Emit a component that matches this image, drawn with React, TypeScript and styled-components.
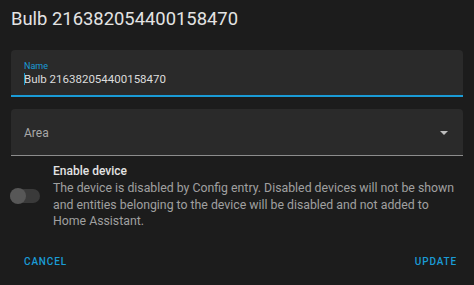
import React from "react";
import styled, { createGlobalStyle } from "styled-components";

const Global = createGlobalStyle`
  html, body { margin: 0; padding: 0; background: #1c1c1c; }
  body { font-family: Roboto, "Noto Sans", sans-serif; -webkit-font-smoothing: antialiased; }
  * { box-sizing: border-box; }
`;

const Dialog = styled.div`
  width: 474px;
  height: 285px;
  background: #1c1c1c;
  padding: 7px 11px 0 11px;
  display: flex;
  flex-direction: column;
`;

const Title = styled.h2`
  margin: 0;
  font-size: 18.4px;
  line-height: 24px;
  font-weight: 400;
  color: #e3e3e3;
`;

const Field = styled.div<{ $focused?: boolean; $mt: number }>`
  margin-top: ${(p) => p.$mt}px;
  background: #2a2a2a;
  border-radius: 4px 4px 0 0;
  border-bottom: ${(p) => (p.$focused ? "2px solid #1a9bd6" : "1px solid #8c8c8c")};
  padding: 0 13px;
  display: flex;
`;

const TextFieldInner = styled.div`
  height: 45px;
  padding-top: 11px;
  display: flex;
  flex-direction: column;
`;

const FloatLabel = styled.div`
  font-size: 9px;
  line-height: 11px;
  color: #1a9bd6;
`;

const Value = styled.div`
  font-size: 11.5px;
  line-height: 14px;
  color: #dcdcdc;
  position: relative;
`;

const Caret = styled.span`
  position: absolute;
  left: 0;
  top: 1px;
  width: 1px;
  height: 12px;
  background: #1a9bd6;
`;

const SelectInner = styled.div`
  height: 46px;
  flex: 1;
  display: flex;
  align-items: center;
  justify-content: space-between;
  padding-top: 1px;
`;

const Placeholder = styled.span`
  font-size: 12px;
  color: #a8a8a8;
`;

const Arrow = styled.span`
  width: 0;
  height: 0;
  border-left: 4px solid transparent;
  border-right: 4px solid transparent;
  border-top: 4.5px solid #bdbdbd;
  margin-right: 2px;
`;

const SwitchRow = styled.div`
  margin-top: 7px;
  display: flex;
  align-items: center;
`;

const SwitchBox = styled.div`
  width: 42px;
  flex: none;
  display: flex;
  align-items: center;
`;

const Track = styled.div`
  position: relative;
  width: 30px;
  height: 14px;
  margin-left: -1px;
  border-radius: 7px;
  background: #3a3a3a;
`;

const Thumb = styled.div`
  position: absolute;
  left: 0;
  top: -1px;
  width: 16px;
  height: 16px;
  border-radius: 50%;
  background: #575757;
`;

const SwitchText = styled.div`
  width: 406px;
  display: flex;
  flex-direction: column;
`;

const SwitchTitle = styled.div`
  font-size: 12px;
  line-height: 17px;
  font-weight: 500;
  color: #e3e3e3;
`;

const SwitchDesc = styled.div`
  font-size: 12.3px;
  line-height: 16.5px;
  color: #a0a0a0;
`;

const Actions = styled.div`
  margin-top: 26px;
  display: flex;
  justify-content: space-between;
  padding: 0 6px 0 13px;
`;

const Button = styled.button`
  background: none;
  border: none;
  padding: 0;
  font-family: Roboto, sans-serif;
  font-size: 10px;
  font-weight: 500;
  letter-spacing: 0.85px;
  color: #1a9bd6;
  line-height: 12px;
`;

export default function App() {
  return (
    <>
      <Global />
      <Dialog>
        <Title>Bulb 216382054400158470</Title>
        <Field $focused $mt={19}>
          <TextFieldInner>
            <FloatLabel>Name</FloatLabel>
            <Value>
              <Caret />
              Bulb 216382054400158470
            </Value>
          </TextFieldInner>
        </Field>
        <Field $mt={12}>
          <SelectInner>
            <Placeholder>Area</Placeholder>
            <Arrow />
          </SelectInner>
        </Field>
        <SwitchRow>
          <SwitchBox>
            <Track>
              <Thumb />
            </Track>
          </SwitchBox>
          <SwitchText>
            <SwitchTitle>Enable device</SwitchTitle>
            <SwitchDesc>
              The device is disabled by Config entry. Disabled devices will not be shown and entities belonging to the device will be disabled and not added to Home Assistant.
            </SwitchDesc>
          </SwitchText>
        </SwitchRow>
        <Actions>
          <Button>CANCEL</Button>
          <Button>UPDATE</Button>
        </Actions>
      </Dialog>
    </>
  );
}
